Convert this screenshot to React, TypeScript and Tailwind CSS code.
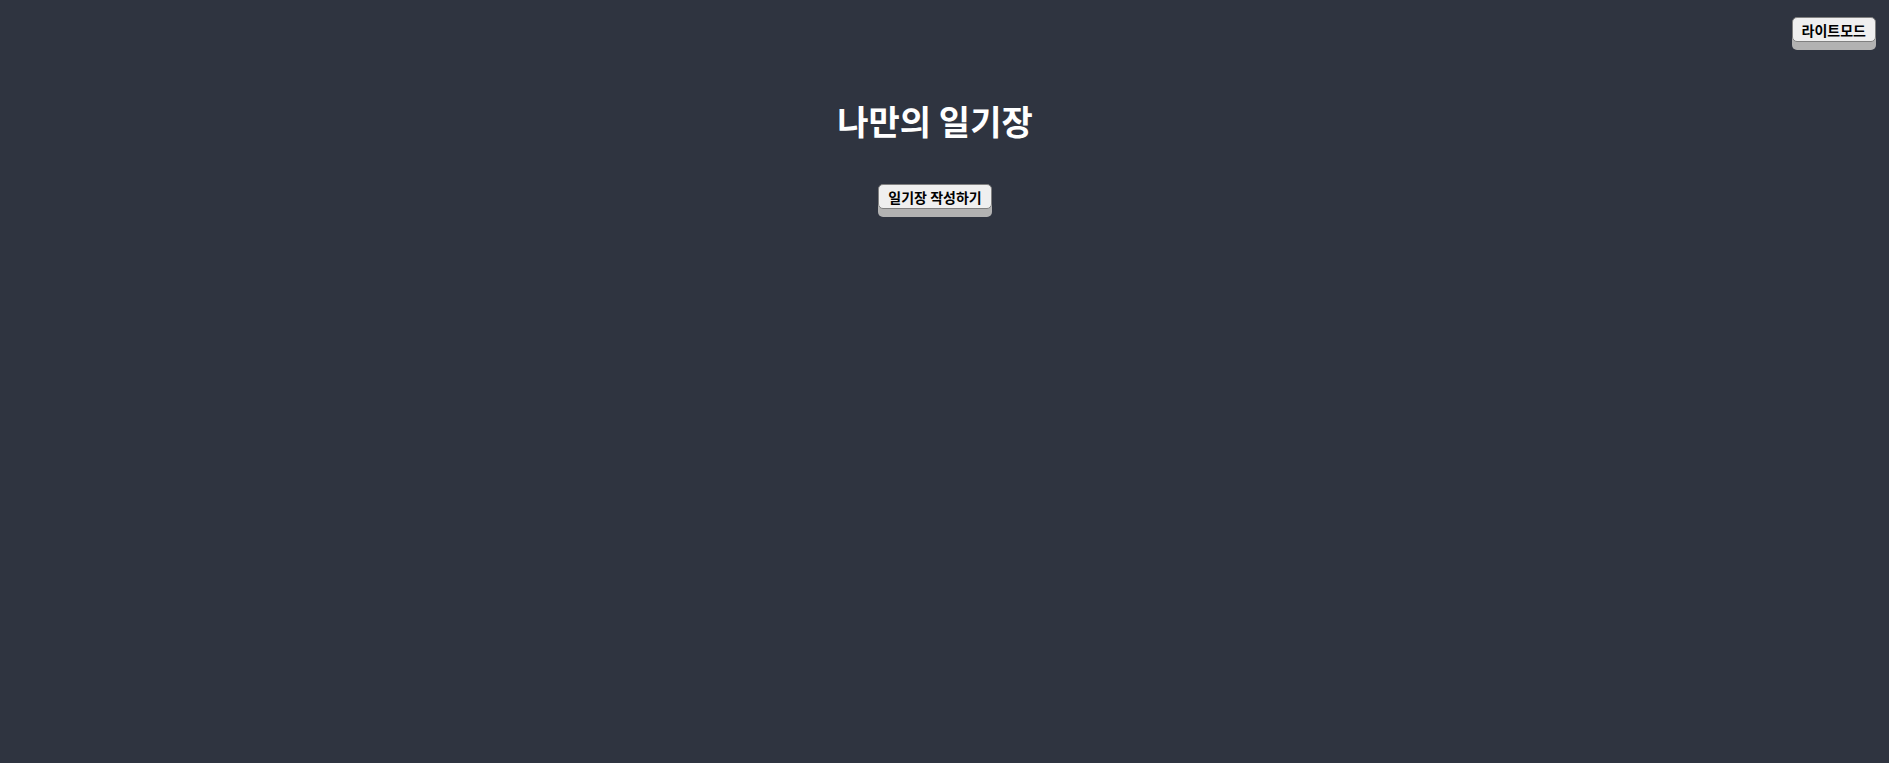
import React from "react"

const btn =
  "h-[25px] px-[9px] bg-[#efefef] border border-[#808080] rounded-[5px] shadow-[0_8px_0_#b2b2b2] text-[14px] font-bold text-black leading-none cursor-pointer"

export default function App() {
  return (
    <div className="relative min-h-screen bg-[#2f3440] font-['Noto_Sans_CJK_KR','Noto_Sans',sans-serif]">
      <button className={`absolute top-[17px] right-[13px] ${btn}`}>라이트모드</button>

      <div className="flex flex-col items-center pr-[19px] pt-[97px]">
        <h1 className="text-[34px] font-bold text-white leading-[48px]">나만의 일기장</h1>
        <button className={`mt-[39px] ${btn}`}>일기장 작성하기</button>
      </div>
    </div>
  )
}
